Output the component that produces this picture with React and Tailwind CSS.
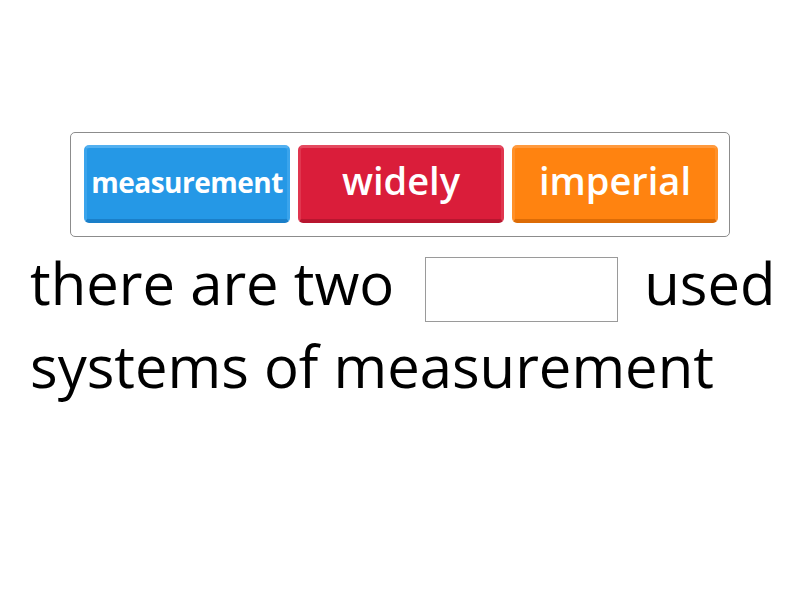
export default function App() {
  const font = { fontFamily: '"Open Sans", "Noto Sans", sans-serif' };
  return (
    <div className="w-[800px] h-[600px] bg-white overflow-hidden" style={font}>
      <div className="pt-[132px] flex justify-center">
        <div className="w-[660px] h-[105px] border border-[#8c8c8c] rounded-[5px] flex items-center gap-2 pl-[13px] pb-[2px]">
          <div className="w-[206px] h-[78px] rounded-[5px] bg-[#2598e6] border-t-[3px] border-t-[#52b0f0] border-x-[3px] border-x-[#3aa4ec] border-b-[4px] border-b-[#1a7fc9] flex items-center justify-center">
            <span className="text-white font-bold text-[28px] tracking-[-0.5px] leading-none pb-[3px]">measurement</span>
          </div>
          <div className="w-[206px] h-[78px] rounded-[5px] bg-[#da1d3a] border-t-[3px] border-t-[#e4495f] border-x-[3px] border-x-[#e0364f] border-b-[4px] border-b-[#b8162f] flex items-center justify-center">
            <span className="text-white font-semibold text-[38px] leading-none pb-[6px]">widely</span>
          </div>
          <div className="w-[206px] h-[78px] rounded-[5px] bg-[#ff8310] border-t-[3px] border-t-[#ff9a3e] border-x-[3px] border-x-[#ff9028] border-b-[4px] border-b-[#dd6c06] flex items-center justify-center">
            <span className="text-white font-semibold text-[38px] leading-none pb-[6px]">imperial</span>
          </div>
        </div>
      </div>
      <div className="pl-[30px] pr-[20px] pt-[19px] text-[58px] leading-[78px] text-black whitespace-nowrap">
        <div className="flex items-center">
          <span className="-mt-[12px]">there are two</span>
          <span className="inline-block w-[193px] h-[65px] border border-[#9a9a9a] ml-[31px] mr-[26px]"></span>
          <span className="-mt-[12px]">used</span>
        </div>
        <div className="mt-[5px]">systems of measurement</div>
      </div>
    </div>
  );
}
